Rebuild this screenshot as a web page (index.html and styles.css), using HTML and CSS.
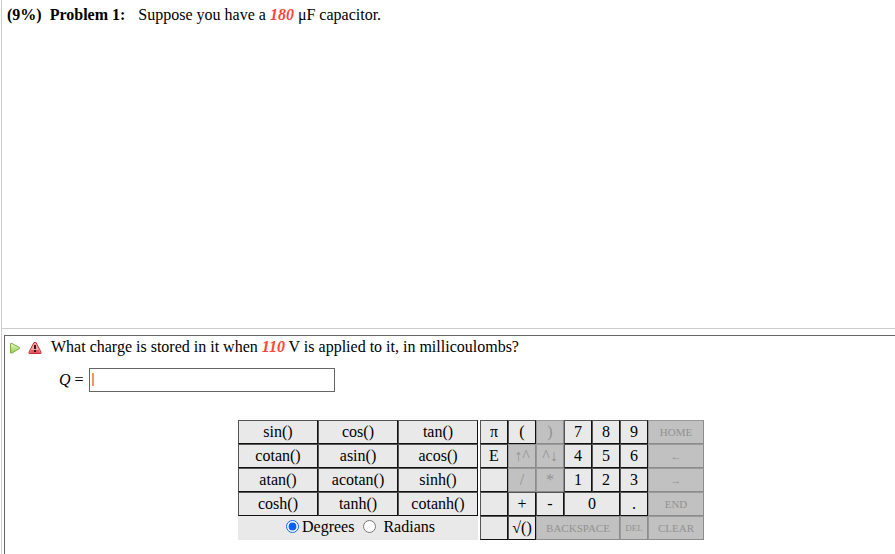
FILE: index.html
```html
<!DOCTYPE html>
<html lang="en">
<head>
    <meta charset="UTF-8">
    <meta name="viewport" content="width=device-width, initial-scale=1.0">
    <title>Problem 1</title>
    <link rel="stylesheet" href="styles.css">
</head>
<body>
    <div class="assignment">
        <div class="problem"><b class="heading">(9%)&nbsp; Problem 1:</b><span>Suppose you have a <b class="value">180</b> μF capacitor.</span></div>
        <div class="part">
            <div class="question">
                <svg class="arrow" width="12" height="12" viewBox="0 0 12 12">
                    <defs><linearGradient id="green" x2="0" y2="1"><stop offset="0" stop-color="#e9f6c8"/><stop offset="1" stop-color="#93cc4c"/></linearGradient></defs>
                    <path d="M1.5 1.5H3L10.5 5.5V6.5L3 11H1.5Z" fill="url(#green)" stroke="#7fae48" stroke-linejoin="round"/>
                </svg>
                <svg class="warning" width="14" height="14" viewBox="0 0 14 14">
                    <path d="M6 1.5H8L13 11V12.5H1V11Z" fill="#f0a5a5" stroke="#c62f38" stroke-linejoin="round"/>
                    <path d="M3 9H11L12 12H2Z" fill="#e4545b"/>
                    <path d="M6 4H8V8H6ZM6 9H8V11H6Z" fill="#3c0d10"/>
                </svg>
                <span>What charge is stored in it when <b class="value">110</b> V is applied to it, in millicoulombs?</span>
            </div>
            <div class="answer">
                <label for="answer"><i>Q</i> =</label>
                <input type="text" class="answer-box" id="answer" value="|">
            </div>
            <div class="keypad">
                <div class="functions">
                    <button>sin()</button><button>cos()</button><button>tan()</button>
                    <button>cotan()</button><button>asin()</button><button>acos()</button>
                    <button>atan()</button><button>acotan()</button><button>sinh()</button>
                    <button>cosh()</button><button>tanh()</button><button>cotanh()</button>
                    <div class="angle">
                        <input type="radio" name="angle" id="degrees" checked><label for="degrees">Degrees</label>
                        <input type="radio" name="angle" id="radians"><label class="spaced" for="radians">Radians</label>
                    </div>
                </div>
                <div class="numbers">
                    <button>π</button><button>(</button><button disabled>)</button><button>7</button><button>8</button><button>9</button><button class="wide small" disabled>HOME</button>
                    <button>E</button><button disabled>↑^</button><button disabled>^↓</button><button>4</button><button>5</button><button>6</button><button class="wide small" disabled>←</button>
                    <button aria-label="blank"></button><button disabled>/</button><button disabled>*</button><button>1</button><button>2</button><button>3</button><button class="wide small" disabled>→</button>
                    <button aria-label="blank"></button><button>+</button><button>-</button><button class="wide">0</button><button>.</button><button class="wide small" disabled>END</button>
                    <button aria-label="blank"></button><button>√()</button><button class="widest small" disabled>BACKSPACE</button><button class="tiny" disabled>DEL</button><button class="wide small" disabled>CLEAR</button>
                </div>
            </div>
        </div>
    </div>
</body>
</html>
```
FILE: styles.css
```css
* { box-sizing: border-box; }
body { margin: 0; background: white; color: black; font: 16px/20px "Liberation Serif", "Times New Roman", serif; overflow: hidden; }
.assignment { min-height: 100vh; margin-left: 1px; border-left: 1px solid #ccc; display: flex; flex-direction: column; }
.problem { min-height: 329px; padding: 5px; border-bottom: 1px solid #ccc; }
.heading { margin-right: 13px; }
.value { color: #ff4538; font-style: italic; }
.part { flex: 1; margin: 6px 0 0 2px; border-top: 1px solid #666; border-left: 1px solid #666; }
.question { display: flex; align-items: center; padding: 1px 4px; }
.arrow { margin: 2px 7px 0 0; }
.warning { margin: 2px 9px 0 0; }
.answer { display: flex; align-items: center; gap: 5px; margin: 10px 0 0 54px; }
.answer-box { width: 246px; height: 24px; padding: 0 2px 2px; border: 1px solid #666; background: white; color: #ff2020; font: bold 14px "Liberation Serif", serif; }

/* keypad */
.keypad { display: flex; gap: 2px; margin: 28px 0 0 233px; }
.functions { display: grid; grid-template-columns: repeat(3, 80px); grid-auto-rows: 24px; background: #e9e9e9; }
.numbers { display: grid; grid-template-columns: repeat(8, 28px); grid-auto-rows: 24px; }
.keypad button { min-width: 0; padding: 0; border: 1px solid; border-color: #555 #111 #111 #555; border-radius: 0; background: #e9e9e9; color: black; font: 16px "Liberation Serif", "DejaVu Sans", serif; white-space: nowrap; }
.keypad button:disabled { border-color: #999 #8c8c8c #8c8c8c #999; background: #c1c1c1; color: #929292; }
.keypad .wide { grid-column: span 2; }
.keypad .widest { grid-column: span 3; }
.keypad .small { font-size: 11px; }
.keypad .tiny { font-size: 9px; }
.angle { grid-column: span 3; display: flex; align-items: center; justify-content: center; padding-right: 4px; }
.angle input { width: 13px; height: 13px; margin: 0 3px 3px 9px; accent-color: #0a60ff; }
.angle label { margin-bottom: 2px; }
.angle .spaced { margin-left: 4px; }
```
